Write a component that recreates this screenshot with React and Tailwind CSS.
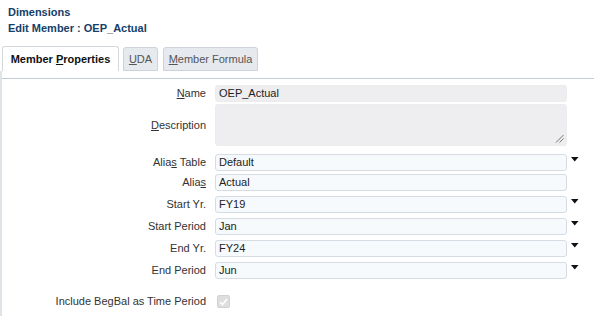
import React from 'react';

const font = { fontFamily: '"Liberation Sans", Arial, sans-serif' };

const Arrow = () => (
  <svg width="8" height="5" viewBox="0 0 8 5" className="mt-[3px] ml-[4px] shrink-0">
    <polygon points="0,0 7.5,0 3.75,4.5" fill="#111" />
  </svg>
);

const Row = ({ label, mt, children, select }) => (
  <div className={`flex items-start ${mt}`}>
    <div className="w-[205px] shrink-0 pr-[1px] text-right text-[11px] leading-[17px] text-[#333]">{label}</div>
    <div className="ml-[8px] w-[352px] shrink-0">{children}</div>
    {select && <Arrow />}
  </div>
);

const Field = ({ value, disabled }) => (
  <div
    className={`h-[17px] rounded-[3px] border px-[3px] text-[11px] leading-[15px] text-[#222] ${
      disabled ? 'border-[#ececee] bg-[#eeeef0]' : 'border-[#d5dce3] bg-[#f6fafd]'
    }`}
  >
    {value}
  </div>
);

export default function App() {
  return (
    <div className="h-[316px] w-[594px] overflow-hidden bg-white" style={font}>
      <div className="px-[8px] pt-[4px] text-[11px] font-bold leading-[16px] text-[#15406a]">
        <div>Dimensions</div>
        <div>Edit Member : OEP_Actual</div>
      </div>

      {/* tabs */}
      <div className="mt-[10px] flex items-start pl-[2px]">
        <div className="flex h-[25px] w-[117px] items-center justify-center rounded-t-[3px] border border-b-0 border-[#d3d8dd] bg-white text-[11px] font-bold text-[#111]">
          Member&nbsp;<span className="underline">P</span>roperties
        </div>
        <div className="ml-[4px] mt-[1px] flex h-[24px] w-[35px] items-center justify-center rounded-t-[3px] border border-[#cdd3d9] bg-[#e6e9ed] text-[11px] text-[#555]">
          <span className="underline">U</span>DA
        </div>
        <div className="ml-[5px] mt-[1px] flex h-[24px] w-[95px] items-center justify-center rounded-t-[3px] border border-[#cdd3d9] bg-[#e6e9ed] text-[11px] text-[#555]">
          <span className="underline">M</span>ember Formula
        </div>
      </div>

      <div className="h-[7px] w-[2px] bg-[#dee3e8]" />
      <div className="flex">
        <div className="w-[2px] shrink-0 bg-[#dee3e8]" />
        <div className="flex-1">
          <div className="h-[1px] bg-[#c4cbd2]" />
          <div className="pb-[10px]">
            <Row label={<><span className="underline">N</span>ame</>} mt="mt-[6px]">
              <Field value="OEP_Actual" disabled />
            </Row>
            <div className="mt-[2px] flex items-center">
              <div className="w-[205px] shrink-0 pr-[1px] text-right text-[11px] text-[#333]">
                <span className="underline">D</span>escription
              </div>
              <div className="relative ml-[8px] h-[42px] w-[352px] shrink-0 rounded-[3px] border border-[#ececee] bg-[#eeeef0]">
                <svg width="9" height="9" viewBox="0 0 9 9" className="absolute bottom-[2px] right-[2px]">
                  <line x1="1" y1="8.5" x2="8.5" y2="1" stroke="#777" strokeWidth="1" />
                  <line x1="4.5" y1="8.5" x2="8.5" y2="4.5" stroke="#777" strokeWidth="1" />
                </svg>
              </div>
            </div>
            <Row label={<>Alia<span className="underline">s</span> Table</>} mt="mt-[8px]" select>
              <Field value="Default" />
            </Row>
            <Row label={<>Alia<span className="underline">s</span></>} mt="mt-[3px]">
              <Field value="Actual" />
            </Row>
            <Row label="Start Yr." mt="mt-[5px]" select>
              <Field value="FY19" />
            </Row>
            <Row label="Start Period" mt="mt-[5px]" select>
              <Field value="Jan" />
            </Row>
            <Row label="End Yr." mt="mt-[5px]" select>
              <Field value="FY24" />
            </Row>
            <Row label="End Period" mt="mt-[5px]" select>
              <Field value="Jun" />
            </Row>
            <div className="mt-[16px] flex items-center">
              <div className="w-[205px] shrink-0 pr-[1px] text-right text-[11px] leading-[13px] text-[#333]">
                Include BegBal as Time Period
              </div>
              <div className="ml-[10px] flex h-[13px] w-[13px] items-center justify-center rounded-[2px] border border-[#d2d2d2] bg-[#dedede]">
                <svg width="9" height="8" viewBox="0 0 9 8">
                  <polyline points="1,4 3.5,6.5 8,1" fill="none" stroke="#fff" strokeWidth="1.6" />
                </svg>
              </div>
            </div>
          </div>
        </div>
      </div>
    </div>
  );
}
